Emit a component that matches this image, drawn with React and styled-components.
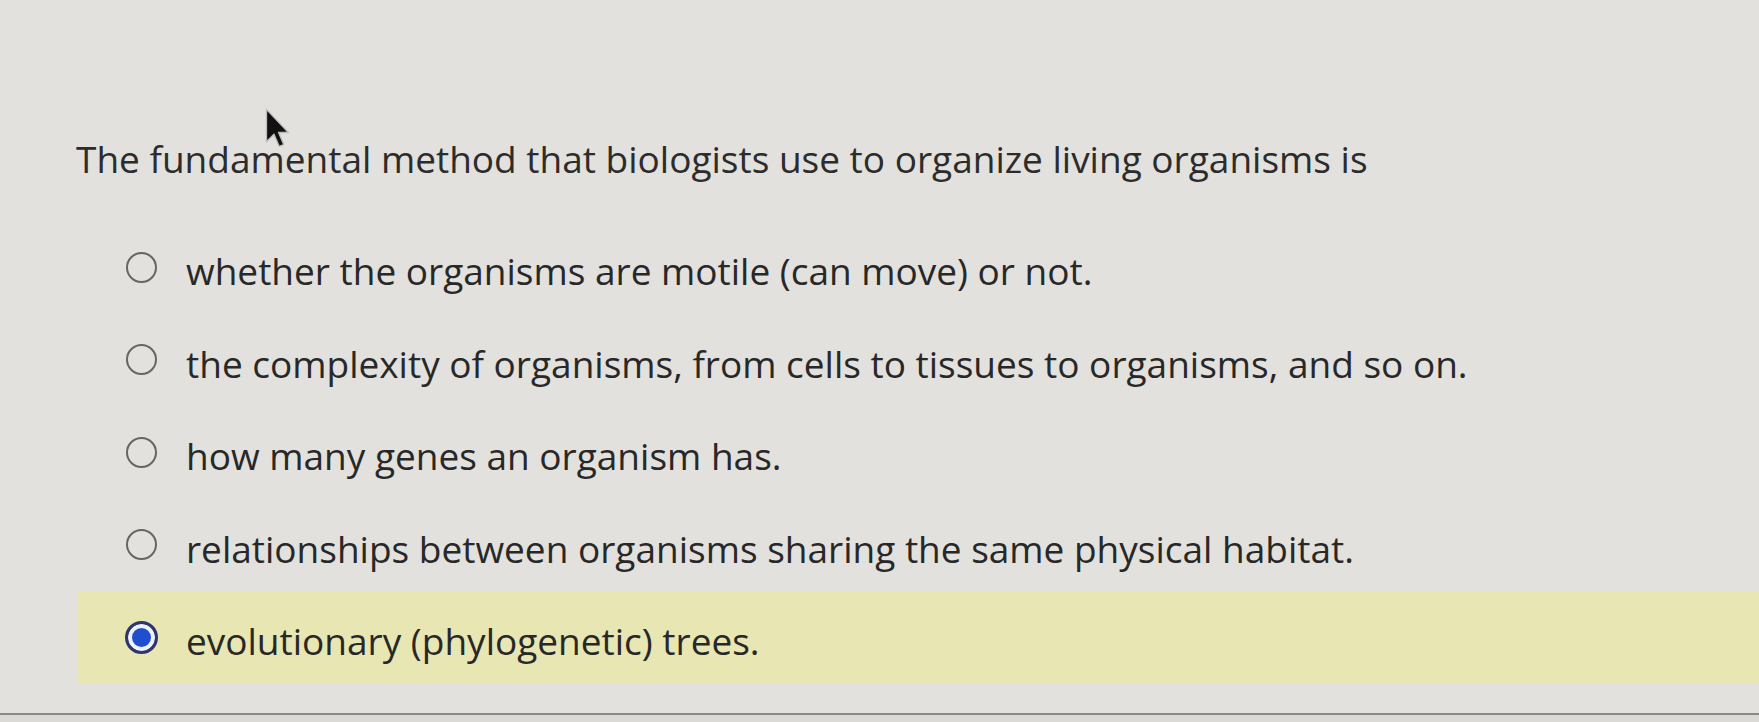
import React from 'react';
import styled, { createGlobalStyle } from 'styled-components';

const GlobalStyle = createGlobalStyle`
  html, body {
    margin: 0;
    padding: 0;
    background: #e3e1dd;
  }
  body {
    font-family: "Open Sans", "Noto Sans", sans-serif;
    color: #2b2b2b;
  }
`;

const Page = styled.div`
  position: relative;
  min-height: 722px;
  padding-top: 134px;
  box-sizing: border-box;
  overflow: hidden;
  background: #e3e1dd;
`;

const Question = styled.p`
  margin: 0 0 37px 76px;
  font-size: 37px;
  line-height: 50px;
  color: #2c2c2c;
`;

const Options = styled.ul`
  list-style: none;
  margin: 0 0 0 77px;
  padding: 0;
`;

const Option = styled.li`
  display: flex;
  align-items: center;
  gap: 29px;
  height: 92.5px;
  padding-left: 49px;
  background: ${p => (p.selected ? '#e8e6b3' : 'transparent')};
`;

const Radio = styled.span`
  flex: none;
  box-sizing: border-box;
  width: ${p => (p.checked ? 33 : 31)}px;
  height: ${p => (p.checked ? 33 : 31)}px;
  margin-left: ${p => (p.checked ? -1 : 0)}px;
  margin-right: ${p => (p.checked ? -1 : 0)}px;
  border-radius: 50%;
  border: ${p => (p.checked ? '3px solid #2c3770' : '2.5px solid #656565')};
  background: ${p => (p.checked ? '#1f4fce' : 'transparent')};
  box-shadow: ${p => (p.checked ? 'inset 0 0 0 4px #f2f2f6' : 'none')};
`;

const Label = styled.span`
  padding-top: 8px;
  font-size: 37px;
  line-height: 50px;
  color: #282828;
`;

const Divider = styled.div`
  margin-top: 29px;
  height: 2px;
  background: #898886;
`;

const Footer = styled.div`
  height: 12px;
  background: #dcdad6;
`;

const Cursor = styled.svg`
  position: absolute;
  left: 263px;
  top: 107px;
  width: 30px;
  height: 44px;
`;

const options = [
  'whether the organisms are motile (can move) or not.',
  'the complexity of organisms, from cells to tissues to organisms, and so on.',
  'how many genes an organism has.',
  'relationships between organisms sharing the same physical habitat.',
  'evolutionary (phylogenetic) trees.',
];

const App = () => (
  <Page>
    <GlobalStyle />
    <Question>
      The fundamental method that biologists use to organize living organisms is
    </Question>
    <Options>
      {options.map((text, i) => (
        <Option key={text} selected={i === 4}>
          <Radio checked={i === 4} />
          <Label>{text}</Label>
        </Option>
      ))}
    </Options>
    <Divider />
    <Footer />
    <Cursor viewBox="0 0 26 38">
      <path
        d="M3 2 L3 30 L9.5 23.5 L14 34 L18 32.5 L13.5 22 L22 22 Z"
        fill="#111"
        stroke="#bdbdbd"
        strokeWidth="1.2"
        strokeLinejoin="round"
      />
    </Cursor>
  </Page>
);

export default App;
